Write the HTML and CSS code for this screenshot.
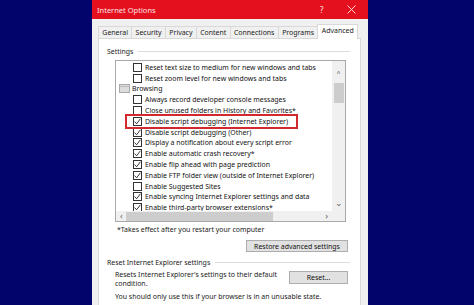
FILE: index.html
```html
<!DOCTYPE html>
<html lang="en">
<head>
    <meta charset="UTF-8" />
    <title>Internet Options</title>
    <link rel="stylesheet" href="styles.css">
</head>
<body>
    <div class="dialog">
        <header class="titlebar">
            <span class="title">Internet Options</span>
            <span class="help">?</span>
            <span class="close">
                <svg width="9" height="9" viewBox="0 0 9 9"><path d="M0.5 0.5 L8.5 8.5 M8.5 0.5 L0.5 8.5" stroke="#ffd6d6" stroke-width="1" fill="none"/></svg>
            </span>
        </header>

        <nav class="tabs">
            <span class="tab">General</span>
            <span class="tab">Security</span>
            <span class="tab">Privacy</span>
            <span class="tab">Content</span>
            <span class="tab">Connections</span>
            <span class="tab">Programs</span>
            <span class="tab active">Advanced</span>
        </nav>

        <section class="panel">
            <div class="group-label"><span>Settings</span></div>

            <div class="listbox">
                <div class="list">
                    <div class="row"><span class="check"></span>Reset text size to medium for new windows and tabs</div>
                    <div class="row"><span class="check"></span>Reset zoom level for new windows and tabs</div>
                    <div class="row category">
                        <svg class="folder" width="11" height="9" viewBox="0 0 11 9"><rect x="0.5" y="0.5" width="10" height="8" fill="#dcdcdc" stroke="#a8a8a8"/><line x1="0.5" y1="2.5" x2="10.5" y2="2.5" stroke="#bdbdbd"/></svg>
                        Browsing
                    </div>
                    <div class="row"><span class="check"></span>Always record developer console messages</div>
                    <div class="row"><span class="check"></span>Close unused folders in History and Favorites*</div>
                    <div class="row marked"><span class="check on"></span>Disable script debugging (Internet Explorer)</div>
                    <div class="row"><span class="check on"></span>Disable script debugging (Other)</div>
                    <div class="row"><span class="check on"></span>Display a notification about every script error</div>
                    <div class="row"><span class="check on"></span>Enable automatic crash recovery*</div>
                    <div class="row"><span class="check on"></span>Enable flip ahead with page prediction</div>
                    <div class="row"><span class="check on"></span>Enable FTP folder view (outside of Internet Explorer)</div>
                    <div class="row"><span class="check"></span>Enable Suggested Sites</div>
                    <div class="row"><span class="check on"></span>Enable syncing Internet Explorer settings and data</div>
                    <div class="row"><span class="check on"></span>Enable third-party browser extensions*</div>
                </div>
                <div class="vscroll">
                    <span class="arrow">&#x2038;</span>
                    <span class="vthumb"></span>
                    <span class="arrow down">&#x2304;</span>
                </div>
                <div class="hscroll">
                    <span class="arrow">&lsaquo;</span>
                    <span class="hthumb"></span>
                    <span class="arrow">&rsaquo;</span>
                </div>
                <div class="corner"></div>
            </div>

            <p class="note">*Takes effect after you restart your computer</p>
            <div class="actions">
                <button class="btn restore">Restore advanced settings</button>
            </div>

            <div class="group-label reset-label"><span>Reset Internet Explorer settings</span></div>
            <div class="reset-row">
                <p>Resets Internet Explorer's settings to their default condition.</p>
                <button class="btn reset">Reset...</button>
            </div>
            <p class="warn">You should only use this if your browser is in an unusable state.</p>
        </section>
    </div>
</body>
</html>
```

FILE: styles.css
```css
* {
    margin: 0;
    padding: 0;
    box-sizing: border-box;
}

body {
    width: 474px;
    height: 305px;
    overflow: hidden;
    background-color: #03036c;
    font-family: 'Noto Sans', sans-serif;
    font-size: 6.95px;
    color: #1a1a1a;
}

.dialog {
    width: 276px;
    height: 305px;
    margin-left: 92px;
    background-color: #f0f0f0;
}

/* Title bar */
.titlebar {
    display: flex;
    align-items: center;
    height: 19px;
    padding-left: 5px;
    background-color: #e5101e;
    color: #ffe4e4;
}

.title {
    flex: 1;
    font-size: 7.5px;
}

.help {
    width: 27px;
    font-size: 8px;
}

.close {
    display: flex;
    width: 21px;
}

/* Tabs */
.tabs {
    display: flex;
    align-items: flex-end;
    height: 19px;
    padding-left: 6px;
}

.tab {
    height: 12px;
    line-height: 11px;
    padding: 0 3.35px;
    border: 1px solid #d9d9d9;
    border-bottom: none;
    border-right: none;
    background-color: #f0f0f0;
}

.tab.active {
    height: 15px;
    line-height: 12px;
    margin-bottom: -1px;
    padding: 0 3.5px;
    background-color: #fff;
    border-right: 1px solid #d9d9d9;
    position: relative;
}

/* Tab page */
.panel {
    width: 263px;
    height: 268px;
    margin-left: 6px;
    padding-top: 7px;
    background-color: #fff;
    border: 1px solid #d9d9d9;
}

.group-label {
    display: flex;
    align-items: center;
    height: 10px;
    padding: 0 10px 0 8px;
}

.group-label::after {
    content: '';
    flex: 1;
    height: 1px;
    margin-left: 5px;
    background-color: #dcdcdc;
}

/* Settings list */
.listbox {
    display: grid;
    grid-template-columns: 1fr 13px;
    grid-template-rows: 1fr 10px;
    width: 231px;
    height: 162px;
    margin: 4px 0 0 16px;
    border: 1px solid #a9a9a9;
    color: #111;
}

.list {
    overflow: hidden;
    padding-top: 1px;
}

.row {
    display: flex;
    align-items: center;
    height: 10.8px;
    padding-left: 17px;
    white-space: nowrap;
}

.row.category {
    padding-left: 3px;
}

.folder {
    margin-right: 2px;
}

.check {
    width: 9px;
    height: 9px;
    margin-right: 3px;
    border: 1px solid #333;
    background-color: #fff;
}

.check.on {
    background: #fff url("data:image/svg+xml,%3Csvg xmlns='http://www.w3.org/2000/svg' width='7' height='7'%3E%3Cpath d='M0.6 3.6 L2.6 5.8 L6.4 0.8' stroke='%23222' fill='none' stroke-width='0.9'/%3E%3C/svg%3E") no-repeat center;
}

.row.marked {
    position: relative;
    z-index: 1;
}

.row.marked::before {
    content: '';
    position: absolute;
    top: -2px;
    bottom: -2px;
    left: 9px;
    width: 169px;
    z-index: -1;
    background-color: #fff;
    border: 2px solid #d3282d;
}

.vscroll {
    display: flex;
    flex-direction: column;
    align-items: center;
    padding-top: 3px;
    background-color: #f0f0f0;
    color: #606060;
}

.arrow {
    font-size: 9px;
    line-height: 10px;
}

.vthumb {
    width: 10px;
    height: 20px;
    margin-top: 9px;
    background-color: #cdcdcd;
}

.arrow.down {
    margin-top: auto;
    margin-bottom: 3px;
}

.hscroll {
    display: flex;
    align-items: center;
    padding: 0 4px;
    background-color: #f0f0f0;
    color: #606060;
}

.hthumb {
    width: 147px;
    height: 9px;
    margin-left: 3px;
    background-color: #cdcdcd;
}

.hscroll .arrow:last-child {
    margin-left: auto;
}

.corner {
    background-color: #f0f0f0;
}

/* Bottom part */
.note {
    height: 10px;
    line-height: 10px;
    margin-top: 3px;
    padding-left: 18px;
}

.actions {
    display: flex;
    justify-content: flex-end;
    padding-right: 12px;
    margin-top: 5px;
}

.btn {
    height: 12px;
    font-family: inherit;
    font-size: 6.95px;
    color: #111;
    background-color: #e1e1e1;
    border: 1px solid #adadad;
}

.restore {
    width: 102px;
}

.reset-label {
    margin-top: 5px;
}

.reset-row {
    display: flex;
    align-items: flex-start;
    justify-content: space-between;
    margin-top: 3px;
    padding: 0 12px 0 16px;
}

.reset-row p {
    width: 168px;
    line-height: 9px;
}

.reset {
    width: 59px;
    height: 13px;
    margin-top: 1px;
}

.warn {
    line-height: 10px;
    margin-top: 4px;
    padding-left: 16px;
}
```
